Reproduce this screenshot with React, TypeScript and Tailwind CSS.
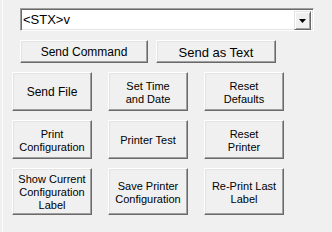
import React from "react";

const btnBase =
  "flex items-center justify-center text-center text-black bg-[#f0f0f0] border border-t-white border-l-white border-r-[#696969] border-b-[#696969] shadow-[inset_-1px_-1px_0_#a0a0a0,inset_1px_1px_0_#e3e3e3] leading-[13px] whitespace-pre-line pt-[2px]";

function Btn({ label, className }: { label: string; className?: string }) {
  return <div className={`${btnBase} ${className ?? ""}`}>{label}</div>;
}

export default function App() {
  return (
    <div
      className="w-[332px] h-[232px] bg-[#f0f0f0] pl-[2px] flex overflow-hidden"
      style={{ fontFamily: '"Liberation Sans", Arial, sans-serif' }}
    >
      <div className="flex-1 flex flex-col border-l border-[#fbfbfb]">
        {/* combobox */}
        <div className="ml-[17px] mt-[8px] w-[294px] h-[23px] flex bg-white border border-t-[#a0a0a0] border-l-[#a0a0a0] border-r-white border-b-white shadow-[inset_1px_1px_0_#696969,inset_-1px_-1px_0_#e3e3e3] p-[2px]">
          <div className="flex-1 flex items-center text-[13px] text-black leading-none">
            &lt;STX&gt;v
          </div>
          <div className="w-[17px] h-[19px] flex items-center justify-center bg-[#f0f0f0] border border-t-[#e3e3e3] border-l-[#e3e3e3] border-r-[#696969] border-b-[#696969] shadow-[inset_1px_1px_0_#fff,inset_-1px_-1px_0_#a0a0a0]">
            <svg width="7" height="4" viewBox="0 0 7 4">
              <polygon points="0,0 7,0 3.5,4" fill="#000" />
            </svg>
          </div>
        </div>

        {/* send buttons */}
        <div className="ml-[17px] mt-[9px] flex gap-[8px]">
          <Btn label="Send Command" className="w-[128px] h-[23px] text-[12px]" />
          <Btn label="Send as Text" className="w-[120px] h-[23px] text-[13px]" />
        </div>

        {/* grid */}
        <div className="ml-[9px] mt-[9px] grid grid-cols-[80px_80px_80px] grid-rows-[39px_39px_47px] gap-x-[16px] gap-y-[9px] text-[11px]">
          <Btn label="Send File" className="text-[12px]" />
          <Btn label={"Set Time\nand Date"} />
          <Btn label={"Reset\nDefaults"} />
          <Btn label={"Print\nConfiguration"} />
          <Btn label="Printer Test" />
          <Btn label={"Reset\nPrinter"} />
          <Btn label={"Show Current\nConfiguration\nLabel"} />
          <Btn label={"Save Printer\nConfiguration"} />
          <Btn label={"Re-Print Last\nLabel"} />
        </div>
      </div>
    </div>
  );
}
